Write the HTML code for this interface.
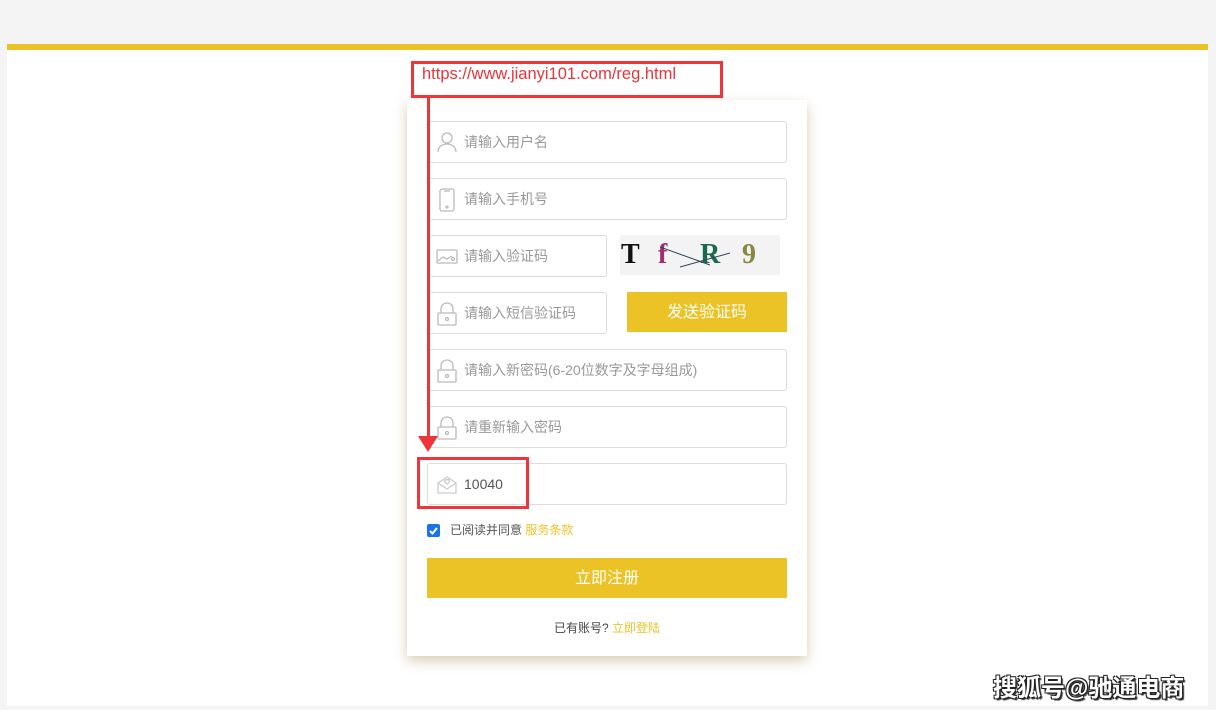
<!DOCTYPE html>
<html><head><meta charset="utf-8"><style>
*{margin:0;padding:0;box-sizing:border-box}
body{width:1216px;height:710px;background:#f4f4f4;position:relative;overflow:hidden;font-family:"Liberation Sans","Noto Sans CJK SC",sans-serif}
.main{position:absolute;left:7px;top:44px;width:1201px;height:662px;background:#fff;border-top:6px solid #ebc326}
.card{position:absolute;left:407px;top:100px;width:400px;height:556px;background:#fff;box-shadow:0 5px 12px rgba(160,135,70,.4)}
.inp{position:absolute;left:427px;height:42px;border:1px solid #ddd;border-radius:3px;font-size:14px;color:#999;line-height:40px;padding-left:36px}
.inp svg{position:absolute;left:8px;top:9px}
.btn{position:absolute;background:#ebc326;color:#fff;text-align:center}
.red{position:absolute;border:3px solid #f0353a}
</style></head><body>
<div class="main"></div>
<div class="card"></div>
<div class="inp" style="top:121px;width:360px"><svg width="22" height="22" viewBox="0 0 22 22" fill="none" stroke="#bbb" stroke-width="1.3"><circle cx="11" cy="7" r="5"/><path d="M2 21c0-5 4-8 9-8s9 3 9 8"/></svg>请输入用户名</div>
<div class="inp" style="top:178px;width:360px"><svg width="22" height="24" viewBox="0 0 22 24" fill="none" stroke="#bbb" stroke-width="1.3"><rect x="4" y="1" width="14" height="22" rx="2"/><path d="M8 3h6"/><circle cx="11" cy="19" r="1"/></svg>请输入手机号</div>
<div class="inp" style="top:235px;width:180px"><svg width="22" height="22" viewBox="0 0 22 22" fill="none" stroke="#bbb" stroke-width="1.3"><rect x="1" y="5" width="20" height="13" rx="1"/><path d="M2 16l5-4 4 2 5-3"/><circle cx="17" cy="14" r="1.5"/></svg>请输入验证码</div>
<div style="position:absolute;left:620px;top:235px;width:160px;height:40px;background:#f3f3f3;font-family:'Liberation Serif',serif;font-weight:bold;font-size:28px;line-height:40px">
<span style="position:absolute;left:1px;color:#111">T</span><span style="position:absolute;left:38px;color:#a03070">f</span><span style="position:absolute;left:80px;color:#1a6a50">R</span><span style="position:absolute;left:122px;color:#888840">9</span>
<svg style="position:absolute;left:40px;top:8px" width="70" height="26"><path d="M0 4L50 22M20 24L70 10" stroke="#345" stroke-width="1"/></svg></div>
<div class="inp" style="top:292px;width:180px"><svg width="22" height="24" viewBox="0 0 22 24" fill="none" stroke="#bbb" stroke-width="1.3"><path d="M5 11V7a6 6 0 0112 0v4"/><rect x="2" y="11" width="18" height="12" rx="1"/><circle cx="11" cy="17" r="1.5"/></svg>请输入短信验证码</div>
<div class="btn" style="left:627px;top:292px;width:160px;height:40px;line-height:42px;font-size:16px">发送验证码</div>
<div class="inp" style="top:349px;width:360px"><svg width="22" height="24" viewBox="0 0 22 24" fill="none" stroke="#bbb" stroke-width="1.3"><path d="M5 11V7a6 6 0 0112 0v4"/><rect x="2" y="11" width="18" height="12" rx="1"/><circle cx="11" cy="17" r="1.5"/></svg>请输入新密码(6-20位数字及字母组成)</div>
<div class="inp" style="top:406px;width:360px"><svg width="22" height="24" viewBox="0 0 22 24" fill="none" stroke="#bbb" stroke-width="1.3"><path d="M5 11V7a6 6 0 0112 0v4"/><rect x="2" y="11" width="18" height="12" rx="1"/><circle cx="11" cy="17" r="1.5"/></svg>请重新输入密码</div>
<div class="inp" style="top:463px;width:360px;color:#555"><svg width="22" height="22" viewBox="0 0 22 22" fill="none" stroke="#ccc" stroke-width="1.3"><path d="M2 10l9-6 9 6v10H2z"/><path d="M2 10l9 6 9-6"/><path d="M11 11c-3-2-3-4-1-4.5 1 0 1 1 1 1s0-1 1-1c2 .5 2 2.5-1 4.5z"/></svg>10040</div>
<div style="position:absolute;left:427px;top:524px;width:13px;height:13px;background:#1a73e8;border-radius:2px"><svg width="13" height="13"><path d="M3 7l2.5 2.5L10 4" stroke="#fff" stroke-width="2" fill="none"/></svg></div>
<div style="position:absolute;left:450px;top:521px;font-size:12px;color:#555">已阅读并同意 <span style="color:#ebc326">服务条款</span></div>
<div class="btn" style="left:427px;top:558px;width:360px;height:40px;line-height:42px;font-size:16px">立即注册</div>
<div style="position:absolute;left:407px;width:400px;top:619px;text-align:center;font-size:12px;color:#444">已有账号? <span style="color:#ebc326">立即登陆</span></div>
<div class="red" style="left:411px;top:61px;width:312px;height:37px"></div>
<div style="position:absolute;left:422px;top:65px;font-size:16.5px;color:#e8353a">https://www.jianyi101.com/reg.html</div>
<div style="position:absolute;left:427px;top:97px;width:3px;height:345px;background:#f0353a"></div>
<svg style="position:absolute;left:418px;top:436px" width="20" height="16"><path d="M0 0h20L10 16z" fill="#f0353a"/></svg>
<div class="red" style="left:417px;top:457px;width:112px;height:52px"></div>
<div style="position:absolute;left:993px;top:668px;font-size:24px;font-weight:bold;color:#fff;letter-spacing:0;text-shadow:1px 1px 0 #222,-1px -1px 0 #222,1px -1px 0 #222,-1px 1px 0 #222,2px 2px 1px #333">搜狐号@驰通电商</div>
</body></html>
